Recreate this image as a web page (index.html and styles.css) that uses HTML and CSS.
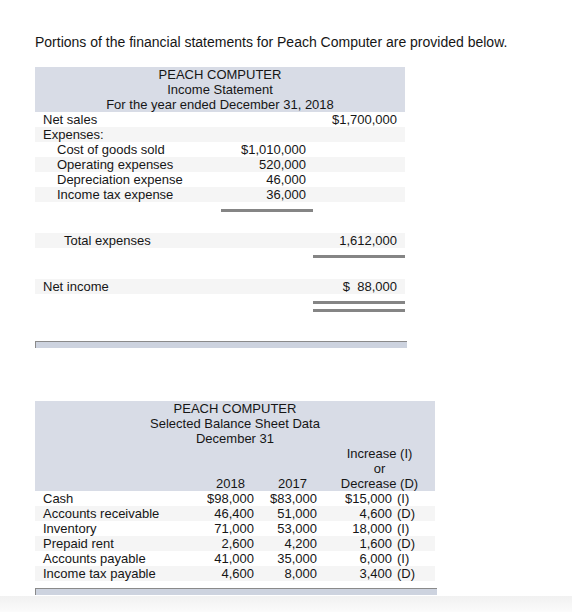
FILE: index.html
```html
<!DOCTYPE html>
<html lang="en">
<head>
<meta charset="utf-8">
<title>Peach Computer</title>
<link rel="stylesheet" href="styles.css">
</head>
<body>
<div class="page">
  <p class="intro">Portions of the financial statements for Peach Computer are provided below.</p>

  <div class="stmt income">
    <div class="hdr">
      <div>PEACH COMPUTER</div>
      <div>Income Statement</div>
      <div>For the year ended December 31, 2018</div>
    </div>
    <div class="row"><span class="lbl">Net sales</span><span></span><span class="num">$1,700,000</span></div>
    <div class="row alt"><span class="lbl">Expenses:</span><span></span><span></span></div>
    <div class="row"><span class="lbl sub">Cost of goods sold</span><span class="num n2">$1,010,000</span><span></span></div>
    <div class="row alt"><span class="lbl sub">Operating expenses</span><span class="num n2">520,000</span><span></span></div>
    <div class="row"><span class="lbl sub">Depreciation expense</span><span class="num n2">46,000</span><span></span></div>
    <div class="row alt"><span class="lbl sub">Income tax expense</span><span class="num n2">36,000</span><span></span></div>
    <div class="rule-row r1"><span></span><span class="rule"></span><span></span></div>
    <div class="row alt total"><span class="lbl tot">Total expenses</span><span></span><span class="num">1,612,000</span></div>
    <div class="rule-row r2"><span></span><span></span><span class="rule"></span></div>
    <div class="row alt net"><span class="lbl">Net income</span><span></span><span class="num">$&nbsp;&nbsp;88,000</span></div>
    <div class="rule-row r3"><span></span><span></span><span class="rule dbl"></span></div>
    <div class="bar"></div>
  </div>

  <div class="stmt balance">
    <div class="hdr2">
      <div class="full">PEACH COMPUTER</div>
      <div class="full">Selected Balance Sheet Data</div>
      <div class="full">December 31</div>
      <div class="brow"><span></span><span></span><span></span><span class="chg">Increase (I)</span></div>
      <div class="brow"><span></span><span></span><span></span><span class="chg">or</span></div>
      <div class="brow"><span></span><span class="yr">2018</span><span class="yr">2017</span><span class="chg">Decrease (D)</span></div>
    </div>
    <div class="brow data"><span class="lbl">Cash</span><span class="num">$98,000</span><span class="num">$83,000</span><span class="num amt">$15,000</span><span class="ind">(I)</span></div>
    <div class="brow data alt"><span class="lbl">Accounts receivable</span><span class="num">46,400</span><span class="num">51,000</span><span class="num amt">4,600</span><span class="ind">(D)</span></div>
    <div class="brow data"><span class="lbl">Inventory</span><span class="num">71,000</span><span class="num">53,000</span><span class="num amt">18,000</span><span class="ind">(I)</span></div>
    <div class="brow data alt"><span class="lbl">Prepaid rent</span><span class="num">2,600</span><span class="num">4,200</span><span class="num amt">1,600</span><span class="ind">(D)</span></div>
    <div class="brow data"><span class="lbl">Accounts payable</span><span class="num">41,000</span><span class="num">35,000</span><span class="num amt">6,000</span><span class="ind">(I)</span></div>
    <div class="brow data alt"><span class="lbl">Income tax payable</span><span class="num">4,600</span><span class="num">8,000</span><span class="num amt">3,400</span><span class="ind">(D)</span></div>
    <div class="bar bar2"></div>
  </div>
</div>
<div class="foot"></div>
</body>
</html>
```

FILE: styles.css
```css
html, body {
  margin: 0;
  padding: 0;
  background: #ffffff;
}
body {
  font-family: "Liberation Sans", Arial, sans-serif;
  font-size: 13px;
  line-height: 15px;
  color: #161616;
  height: 612px;
  position: relative;
  overflow: hidden;
}
.page {
  padding: 34px 0 0 35px;
}
.intro {
  margin: 0 0 17px 0;
  font-size: 14px;
  line-height: 16px;
  white-space: nowrap;
}

/* income statement */
.income {
  width: 370px;
}
.hdr {
  background: #d8dce6;
  text-align: center;
}
.row {
  display: grid;
  grid-template-columns: 186px 92px 92px;
  height: 15px;
}
.alt {
  background: #f5f5f5;
}
.lbl {
  padding-left: 8px;
  white-space: nowrap;
}
.lbl.sub {
  padding-left: 22px;
}
.lbl.tot {
  padding-left: 29px;
}
.num {
  text-align: right;
  padding-right: 8px;
  white-space: nowrap;
}
.num.n2 {
  padding-right: 7px;
}
.rule-row {
  display: grid;
  grid-template-columns: 186px 92px 92px;
}
.rule {
  display: block;
  height: 3px;
  background: #858585;
}
.rule.dbl {
  background: transparent;
  border-top: 3px solid #858585;
  border-bottom: 3px solid #858585;
  height: 5px;
}
.r1 { margin-top: 7px; }
.total { margin-top: 21px; }
.r2 { margin-top: 7px; }
.net { margin-top: 21px; }
.r3 { margin-top: 7px; }
.bar {
  width: 371px;
  height: 6px;
  border-top: 1px solid #8a8a8a;
  border-left: 1px solid #8a8a8a;
  background: #cdd3df;
  margin-top: 29px;
}

/* balance sheet */
.balance {
  width: 400px;
  margin-top: 53px;
}
.hdr2 {
  background: #d8dce6;
}
.full {
  text-align: center;
}
.brow {
  display: grid;
  grid-template-columns: 165px 61px 63px 111px;
  height: 15px;
}
.brow.data {
  grid-template-columns: 165px 61px 63px 73px 38px;
}
.yr, .chg {
  text-align: center;
}
.brow .num {
  padding-right: 7px;
}
.brow .num.amt {
  padding-right: 5px;
}
.ind {
  white-space: nowrap;
}
.bar2 {
  width: 401px;
  margin-top: 7px;
}

.foot {
  position: absolute;
  left: 0;
  right: 0;
  bottom: 0;
  height: 16px;
  background: linear-gradient(#f1f1f1, #fbfbfb);
}
```
